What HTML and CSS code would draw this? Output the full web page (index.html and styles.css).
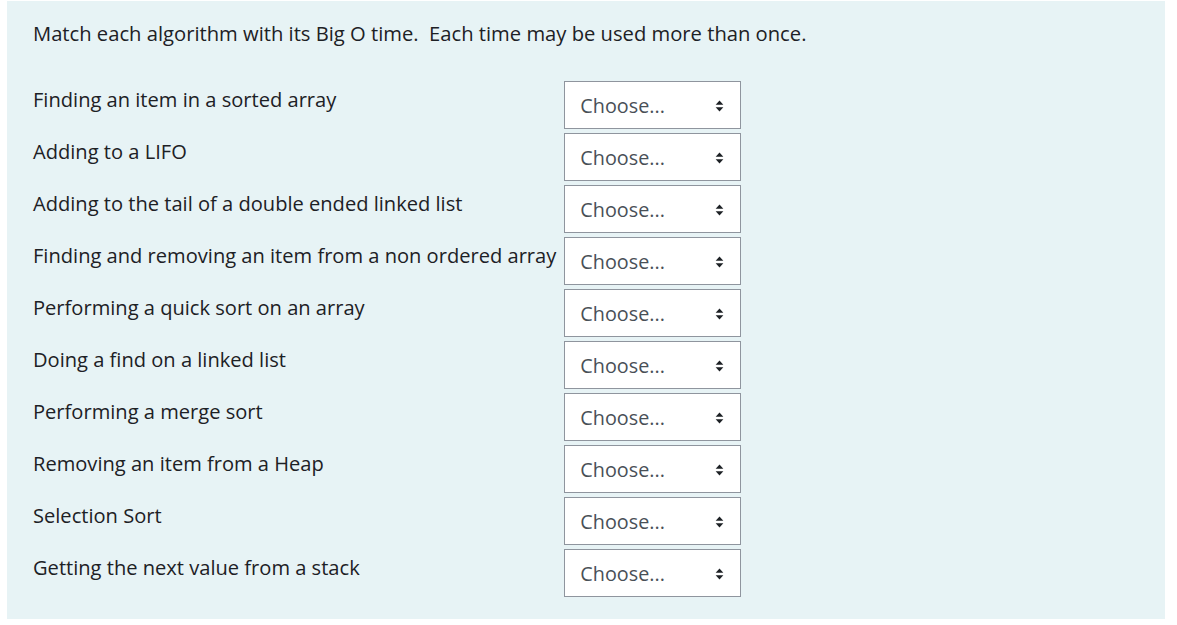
FILE: index.html
```html
<!DOCTYPE html>
<html>
<head>
<meta charset="utf-8">
<link rel="stylesheet" href="styles.css">
</head>
<body>
<div class="panel">
  <p class="title">Match each algorithm with its Big O time.&nbsp; Each time may be used more than once.</p>
  <div class="grid">
    <div class="label">Finding an item in a sorted array</div>
    <div class="sel"><span>Choose...</span><svg class="arr" viewBox="0 0 10 14"><path d="M5 0.5 L9.5 5.5 H0.5 Z M5 13.5 L9.5 8.5 H0.5 Z"/></svg></div>
    <div class="label">Adding to a LIFO</div>
    <div class="sel"><span>Choose...</span><svg class="arr" viewBox="0 0 10 14"><path d="M5 0.5 L9.5 5.5 H0.5 Z M5 13.5 L9.5 8.5 H0.5 Z"/></svg></div>
    <div class="label">Adding to the tail of a double ended linked list</div>
    <div class="sel"><span>Choose...</span><svg class="arr" viewBox="0 0 10 14"><path d="M5 0.5 L9.5 5.5 H0.5 Z M5 13.5 L9.5 8.5 H0.5 Z"/></svg></div>
    <div class="label">Finding and removing an item from a non ordered array</div>
    <div class="sel"><span>Choose...</span><svg class="arr" viewBox="0 0 10 14"><path d="M5 0.5 L9.5 5.5 H0.5 Z M5 13.5 L9.5 8.5 H0.5 Z"/></svg></div>
    <div class="label">Performing a quick sort on an array</div>
    <div class="sel"><span>Choose...</span><svg class="arr" viewBox="0 0 10 14"><path d="M5 0.5 L9.5 5.5 H0.5 Z M5 13.5 L9.5 8.5 H0.5 Z"/></svg></div>
    <div class="label">Doing a find on a linked list</div>
    <div class="sel"><span>Choose...</span><svg class="arr" viewBox="0 0 10 14"><path d="M5 0.5 L9.5 5.5 H0.5 Z M5 13.5 L9.5 8.5 H0.5 Z"/></svg></div>
    <div class="label">Performing a merge sort</div>
    <div class="sel"><span>Choose...</span><svg class="arr" viewBox="0 0 10 14"><path d="M5 0.5 L9.5 5.5 H0.5 Z M5 13.5 L9.5 8.5 H0.5 Z"/></svg></div>
    <div class="label">Removing an item from a Heap</div>
    <div class="sel"><span>Choose...</span><svg class="arr" viewBox="0 0 10 14"><path d="M5 0.5 L9.5 5.5 H0.5 Z M5 13.5 L9.5 8.5 H0.5 Z"/></svg></div>
    <div class="label">Selection Sort</div>
    <div class="sel"><span>Choose...</span><svg class="arr" viewBox="0 0 10 14"><path d="M5 0.5 L9.5 5.5 H0.5 Z M5 13.5 L9.5 8.5 H0.5 Z"/></svg></div>
    <div class="label">Getting the next value from a stack</div>
    <div class="sel"><span>Choose...</span><svg class="arr" viewBox="0 0 10 14"><path d="M5 0.5 L9.5 5.5 H0.5 Z M5 13.5 L9.5 8.5 H0.5 Z"/></svg></div>
  </div>
</div>
</body>
</html>
```
FILE: styles.css
```css
html, body {
  margin: 0;
  padding: 0;
  background: #ffffff;
}
body {
  padding: 1px 12px 0 7px;
  font-family: "Open Sans", "Noto Sans", sans-serif;
  color: #1d2125;
}
.panel {
  background: #e7f3f5;
  padding: 17px 26px 22px 26px;
}
.title {
  margin: 0 0 33px 0;
  font-size: 20.2px;
  line-height: 30px;
}
.grid {
  display: grid;
  grid-template-columns: max-content 177px;
  column-gap: 8px;
  row-gap: 4px;
}
.label {
  font-size: 20.1px;
  line-height: 30px;
  padding-top: 4px;
}
.sel {
  position: relative;
  box-sizing: border-box;
  height: 48px;
  background: #ffffff;
  border: 1px solid #8f959e;
  display: flex;
  align-items: center;
  padding-left: 15px;
  font-size: 19.8px;
  color: #495057;
}
.arr {
  position: absolute;
  right: 16px;
  top: 18px;
  width: 9px;
  height: 12px;
  fill: #1d2125;
}
```
